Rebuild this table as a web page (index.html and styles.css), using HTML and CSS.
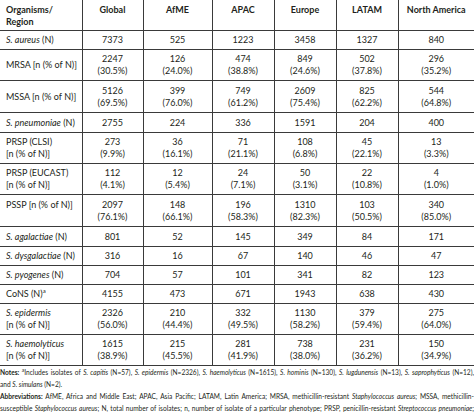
FILE: index.html
```html
<!DOCTYPE html>
<html>
<head>
<meta charset="utf-8">
<link rel="stylesheet" href="styles.css">
</head>
<body>
<table class="data">
  <colgroup>
    <col class="c0"><col class="c1"><col class="c2"><col class="c3"><col class="c4"><col class="c5"><col class="c6">
  </colgroup>
  <thead>
    <tr class="hdr">
      <th class="lbl">Organisms/<br>Region</th>
      <th>Global</th><th>AfME</th><th>APAC</th><th>Europe</th><th>LATAM</th><th>North America</th>
    </tr>
  </thead>
  <tbody>
    <tr class="r1"><td class="lbl"><i>S. aureus</i> (N)</td><td>7373</td><td>525</td><td>1223</td><td>3458</td><td>1327</td><td>840</td></tr>
    <tr class="r2"><td class="lbl">MRSA [n (% of N)]</td><td>2247<br>(30.5%)</td><td>126<br>(24.0%)</td><td>474<br>(38.8%)</td><td>849<br>(24.6%)</td><td>502<br>(37.8%)</td><td>296<br>(35.2%)</td></tr>
    <tr class="r2b"><td class="lbl">MSSA [n (% of N)]</td><td>5126<br>(69.5%)</td><td>399<br>(76.0%)</td><td>749<br>(61.2%)</td><td>2609<br>(75.4%)</td><td>825<br>(62.2%)</td><td>544<br>(64.8%)</td></tr>
    <tr class="r1b"><td class="lbl"><i>S. pneumoniae</i> (N)</td><td>2755</td><td>224</td><td>336</td><td>1591</td><td>204</td><td>400</td></tr>
    <tr class="r2"><td class="lbl">PRSP (CLSI)<br>[n (% of N)]</td><td>273<br>(9.9%)</td><td>36<br>(16.1%)</td><td>71<br>(21.1%)</td><td>108<br>(6.8%)</td><td>45<br>(22.1%)</td><td>13<br>(3.3%)</td></tr>
    <tr class="r2"><td class="lbl">PRSP (EUCAST)<br>[n (% of N)]</td><td>112<br>(4.1%)</td><td>12<br>(5.4%)</td><td>24<br>(7.1%)</td><td>50<br>(3.1%)</td><td>22<br>(10.8%)</td><td>4<br>(1.0%)</td></tr>
    <tr class="r2b"><td class="lbl">PSSP [n (% of N)]<br>&nbsp;</td><td>2097<br>(76.1%)</td><td>148<br>(66.1%)</td><td>196<br>(58.3%)</td><td>1310<br>(82.3%)</td><td>103<br>(50.5%)</td><td>340<br>(85.0%)</td></tr>
    <tr class="r1b"><td class="lbl"><i>S. agalactiae</i> (N)</td><td>801</td><td>52</td><td>145</td><td>349</td><td>84</td><td>171</td></tr>
    <tr class="r1"><td class="lbl"><i>S. dysgalactiae</i> (N)</td><td>316</td><td>16</td><td>67</td><td>140</td><td>46</td><td>47</td></tr>
    <tr class="r1"><td class="lbl"><i>S. pyogenes</i> (N)</td><td>704</td><td>57</td><td>101</td><td>341</td><td>82</td><td>123</td></tr>
    <tr class="r1"><td class="lbl">CoNS (N)<sup>a</sup></td><td>4155</td><td>473</td><td>671</td><td>1943</td><td>638</td><td>430</td></tr>
    <tr class="r2"><td class="lbl"><i>S. epidermis</i><br>[n (% of N)]</td><td>2326<br>(56.0%)</td><td>210<br>(44.4%)</td><td>332<br>(49.5%)</td><td>1130<br>(58.2%)</td><td>379<br>(59.4%)</td><td>275<br>(64.0%)</td></tr>
    <tr class="r2"><td class="lbl"><i>S. haemolyticus</i><br>[n (% of N)]</td><td>1615<br>(38.9%)</td><td>215<br>(45.5%)</td><td>281<br>(41.9%)</td><td>738<br>(38.0%)</td><td>231<br>(36.2%)</td><td>150<br>(34.9%)</td></tr>
  </tbody>
</table>
<div class="notes">
  <span class="ln just"><b>Notes:</b> <sup>a</sup>Includes isolates of <i>S. capitis</i> (N=57), <i>S. epidermis</i> (N=2326), <i>S. haemolyticus</i> (N=1615), <i>S. hominis</i> (N=130), <i>S. lugdunensis</i> (N=13), <i>S. saprophyticus</i> (N=12),</span>
  <span class="ln">and <i>S. simulans</i> (N=2).</span>
  <span class="ln just"><b>Abbreviations:</b> AfME, Africa and Middle East; APAC, Asia Pacific; LATAM, Latin America; MRSA, methicillin-resistant <i>Staphylococcus aureus</i>; MSSA, methicillin-</span>
  <span class="ln just">susceptible <i>Staphylococcus aureus</i>; N, total number of isolates; n, number of isolate of a particular phenotype; PRSP, penicillin-resistant <i>Streptococcus pneumoniae</i>;</span>
  <span class="ln">PSSP, penicillin-susceptible <i>Streptococcus pneumoniae</i>; CoNS, coagulase-negative staphylococci.</span>
</div>
</body>
</html>
```

FILE: styles.css
```css
html, body {
  margin: 0;
  padding: 0;
  background: #ffffff;
}
body {
  font-family: Lato, "Open Sans", "DejaVu Sans", sans-serif;
  color: #231f20;
  width: 474px;
  overflow: hidden;
}
.data {
  border-collapse: collapse;
  table-layout: fixed;
  width: 474px;
  font-size: 9px;
  line-height: 12px;
}
.c0 { width: 82px; }
.c1 { width: 61px; }
.c2 { width: 69px; }
.c3 { width: 62px; }
.c4 { width: 62px; }
.c5 { width: 62px; }
.c6 { width: 76px; }
.data th, .data td {
  border-right: 1px solid #3a3a3a;
  border-bottom: 1px solid #3a3a3a;
  text-align: center;
  padding: 0 2px;
  white-space: nowrap;
  overflow: hidden;
}
.data th:last-child, .data td:last-child {
  border-right: none;
}
.data th {
  font-weight: 700;
  vertical-align: top;
  padding-top: 4px;
  height: 26px;
}
.data .lbl {
  text-align: left;
  padding-left: 6px;
}
.data td {
  padding-top: 0;
  padding-bottom: 0;
}
.r1 td { height: 18px; }
.r1b td { height: 19px; }
.r2 td { height: 30px; }
.r2b td { height: 31px; }
.data sup {
  font-size: 6px;
  line-height: 0;
  vertical-align: 4px;
}
.notes {
  font-size: 6.6px;
  line-height: 12px;
}
.notes .ln {
  display: block;
  white-space: nowrap;
}
.notes .ln.just {
  white-space: normal;
  text-align: justify;
  text-align-last: justify;
}
.notes sup {
  font-size: 5px;
  line-height: 0;
  vertical-align: 3px;
}
```
